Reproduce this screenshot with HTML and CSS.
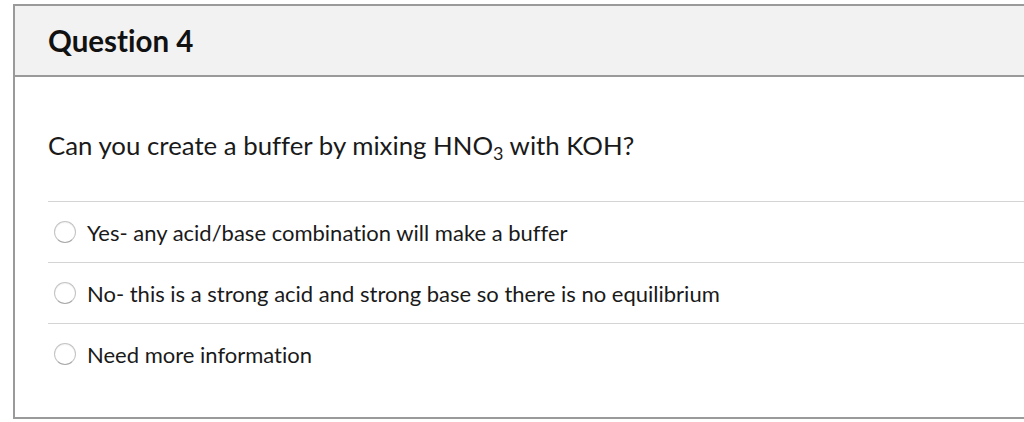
FILE: index.html
```html
<!DOCTYPE html>
<html>
<head>
<meta charset="utf-8">
<link rel="stylesheet" href="styles.css">
</head>
<body>
<div class="question">
  <div class="q-header">
    <h2 class="q-title">Question 4</h2>
  </div>
  <div class="q-body">
    <p class="q-text">Can you create a buffer by mixing HNO<sub>3</sub> with KOH?</p>
    <div class="answers">
      <label class="answer"><span class="radio"></span><span class="answer-text">Yes- any acid/base combination will make a buffer</span></label>
      <label class="answer"><span class="radio"></span><span class="answer-text">No- this is a strong acid and strong base so there is no equilibrium</span></label>
      <label class="answer"><span class="radio"></span><span class="answer-text">Need more information</span></label>
    </div>
  </div>
</div>
</body>
</html>
```

FILE: styles.css
```css
html, body {
  margin: 0;
  padding: 0;
  background: #ffffff;
  overflow: hidden;
}
body {
  font-family: Lato, "Open Sans", sans-serif;
  color: #1a1a1a;
  font-variant-ligatures: none;
}
.question {
  margin: 4px 0 0 13px;
  border: 2px solid #9a9a9a;
  border-right: 0;
}
.q-header {
  background: #f2f2f2;
  height: 69px;
  border-bottom: 2px solid #9a9a9a;
  display: flex;
  align-items: center;
  padding-left: 33px;
}
.q-title {
  margin: 0;
  font-size: 29.5px;
  font-weight: 700;
  color: #111;
}
.q-body {
  padding: 0 0 33px 33px;
}
.q-text {
  margin: 0;
  padding: 49px 0 37px 0;
  font-size: 25.8px;
  line-height: 38px;
  color: #1a1a1a;
}
.q-text sub {
  font-size: 18px;
  vertical-align: -5px;
  line-height: 0;
}
.answers {
  display: flex;
  flex-direction: column;
}
.answer {
  display: flex;
  align-items: center;
  height: 60px;
  border-top: 1px solid #d4d4d4;
  padding-left: 6px;
  gap: 11px;
  font-size: 22px;
}
.radio {
  width: 20px;
  height: 20px;
  border-radius: 50%;
  border: 1px solid #c4c4c4;
  border-bottom-color: #a8a8a8;
  background: #ffffff;
  box-shadow: inset 0 1px 1px rgba(0,0,0,0.05);
  flex: none;
}
.answer-text {
  color: #1a1a1a;
}
```
